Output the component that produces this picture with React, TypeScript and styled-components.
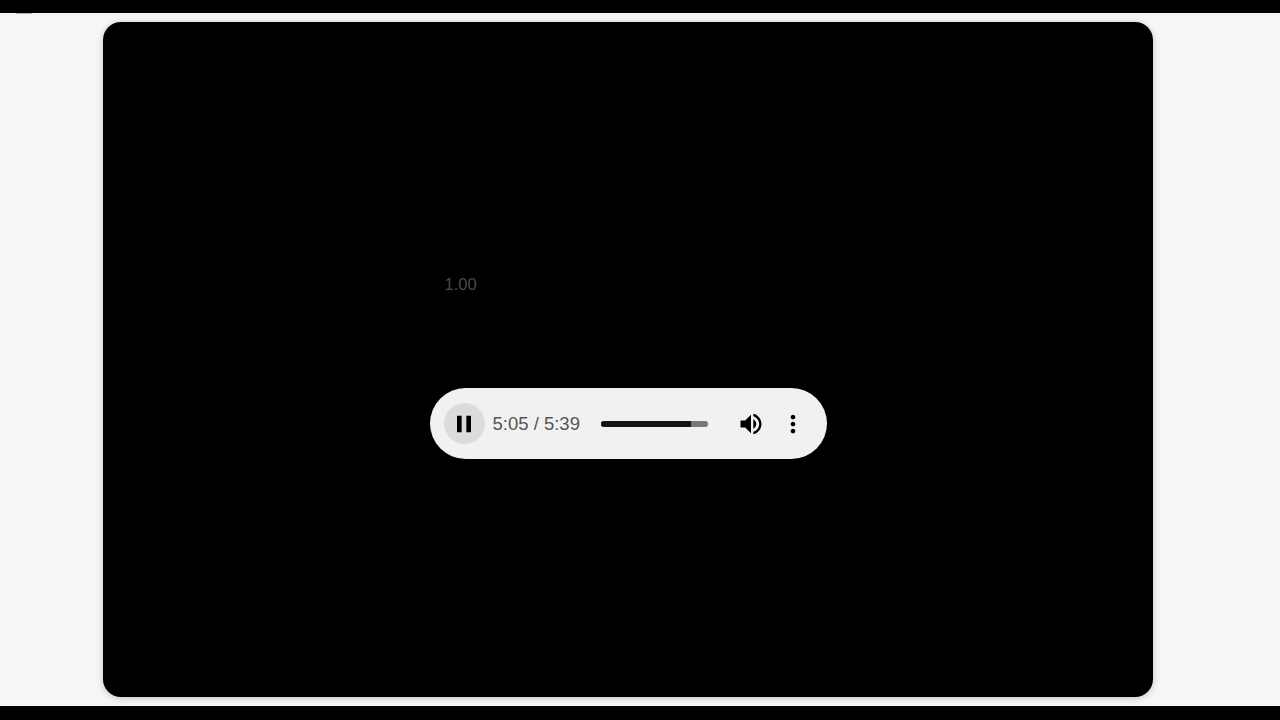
import React from "react";
import styled, { createGlobalStyle } from "styled-components";

const GlobalStyle = createGlobalStyle`
  html, body {
    margin: 0;
    padding: 0;
    background: #000000;
  }
  body {
    font-family: "Liberation Sans", Arial, sans-serif;
  }
`;

const App: React.FC = () => {
  return (
    <>
      <GlobalStyle />
      <Page>
        <TopMark />
        <Card>
          <PlayerColumn>
            <SpeedLabel>1.00</SpeedLabel>
            <Player>
              <PauseButton aria-label="pause">
                <Icon viewBox="0 0 24 24">
                  <path d="M6 19h4V5H6v14zm8-14v14h4V5h-4z" />
                </Icon>
              </PauseButton>
              <TimeText>5:05 / 5:39</TimeText>
              <Track>
                <Buffered />
                <Played />
              </Track>
              <VolumeButton aria-label="volume">
                <Icon viewBox="0 0 24 24">
                  <path d="M3 9v6h4l5 5V4L7 9H3zm13.5 3c0-1.77-1.02-3.29-2.5-4.03v8.05c1.48-.73 2.5-2.25 2.5-4.02zM14 3.23v2.06c2.89.86 5 3.54 5 6.71s-2.11 5.85-5 6.71v2.06c4.01-.91 7-4.49 7-8.77s-2.99-7.86-7-8.77z" />
                </Icon>
              </VolumeButton>
              <MoreButton aria-label="more">
                <Icon viewBox="0 0 24 24">
                  <path d="M12 8c1.1 0 2-.9 2-2s-.9-2-2-2-2 .9-2 2 .9 2 2 2zm0 2c-1.1 0-2 .9-2 2s.9 2 2 2 2-.9 2-2-.9-2-2-2zm0 6c-1.1 0-2 .9-2 2s.9 2 2 2 2-.9 2-2-.9-2-2-2z" />
                </Icon>
              </MoreButton>
            </Player>
          </PlayerColumn>
        </Card>
      </Page>
    </>
  );
};

export default App;

/* Styled Components */
const Page = styled.div`
  position: relative;
  box-sizing: border-box;
  height: 693px;
  margin-top: 13px;
  padding: 9px 127px 9px 103px;
  background: #f6f6f6;
`;

const TopMark = styled.div`
  position: absolute;
  top: 0;
  left: 16px;
  width: 16px;
  height: 1px;
  background: #b4b4b4;
`;

const Card = styled.div`
  height: 675px;
  width: 1050px;
  background: #000000;
  border-radius: 18px;
  box-shadow: 0 1px 6px rgba(0, 0, 0, 0.22);
  display: flex;
  justify-content: center;
`;

const PlayerColumn = styled.div`
  width: 397px;
  padding-top: 252px;
  display: flex;
  flex-direction: column;
`;

const SpeedLabel = styled.div`
  height: 20px;
  margin-bottom: 94px;
  padding-left: 15px;
  font-size: 16.5px;
  line-height: 20px;
  color: #4a4a4a;
`;

const Player = styled.div`
  height: 71px;
  padding-left: 14px;
  border-radius: 36px;
  background: #f1f1f1;
  display: flex;
  align-items: center;
`;

const IconButton = styled.div`
  display: flex;
  align-items: center;
  justify-content: center;
  color: #000000;
`;

const PauseButton = styled(IconButton)`
  width: 41px;
  height: 41px;
  border-radius: 50%;
  background: #dcdcdc;
`;

const VolumeButton = styled(IconButton)`
  width: 28px;
  height: 28px;
  margin-left: 29px;
`;

const MoreButton = styled(IconButton)`
  width: 28px;
  height: 28px;
  margin-left: 14px;
`;

const Icon = styled.svg`
  width: 28px;
  height: 28px;
  fill: currentColor;
  display: block;
`;

const TimeText = styled.span`
  margin-left: 8px;
  width: 89px;
  font-size: 18.5px;
  white-space: nowrap;
  color: #555555;
`;

const Track = styled.div`
  position: relative;
  width: 107px;
  height: 6px;
  margin-left: 19px;
  border-radius: 3px;
  background: #c4c4c4;
  overflow: hidden;
`;

const Buffered = styled.div`
  position: absolute;
  inset: 0;
  background: #777777;
`;

const Played = styled.div`
  position: absolute;
  top: 0;
  bottom: 0;
  left: 0;
  width: 90px;
  background: #151515;
`;
